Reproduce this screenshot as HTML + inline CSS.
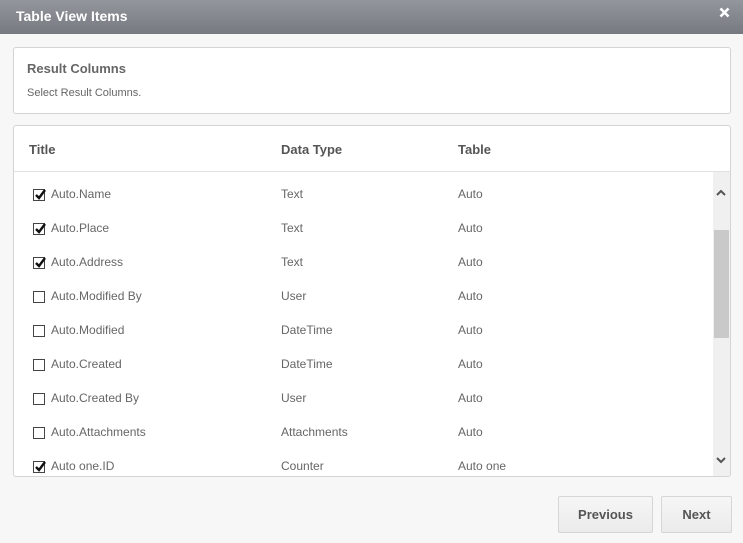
<!DOCTYPE html><html><head><style>
body{margin:0;width:743px;height:543px;background:#f7f7f7;font-family:"Liberation Sans",sans-serif;position:relative;overflow:hidden}
.hdr{position:absolute;left:0;top:0;width:743px;height:34px;background:linear-gradient(#93969d,#76797f);color:#fff;font-weight:bold;font-size:14px}
.ttl{position:absolute;left:16px;top:8px}
.x{position:absolute;left:719px;top:7px}
.p{position:absolute;background:#fff;border:1px solid #d4d4d4;border-radius:3px;box-sizing:border-box}
.t{position:absolute;font-size:12px;color:#666;white-space:nowrap}
.h{position:absolute;font-size:13px;font-weight:bold;color:#555}
.cb{position:absolute;left:33px;width:12px;height:12px;border:1px solid #444;background:#fff;box-sizing:border-box}
.btn{position:absolute;top:496px;height:37px;border:1px solid #d6d6d6;border-radius:2px;background:linear-gradient(#f6f6f6,#ebebeb);box-sizing:border-box;font-size:13px;font-weight:bold;color:#555;text-align:center;line-height:35px}
</style></head><body>
<div class="hdr"><span class="ttl">Table View Items</span><svg class="x" width="11" height="11"><path d="M1.5 1.5L9.5 9.5M9.5 1.5L1.5 9.5" stroke="#fff" stroke-width="2.6"/></svg></div>
<div class="p" style="left:13px;top:47px;width:718px;height:67px"></div>
<div class="h" style="left:27px;top:61px;color:#666">Result Columns</div>
<div class="t" style="left:27px;top:87px;font-size:11px">Select Result Columns.</div>
<div class="p" style="left:13px;top:125px;width:718px;height:352px;overflow:hidden">
<div style="position:absolute;left:0;top:45px;width:716px;border-top:1px solid #e2e2e2"></div>
<div style="position:absolute;left:699px;top:46px;width:17px;height:305px;background:#f0f0f0"></div>
<div style="position:absolute;left:700px;top:104px;width:15px;height:108px;background:#c9c9c9"></div>
<svg style="position:absolute;left:701px;top:63px" width="12" height="8"><path d="M2 6L6 2L10 6" stroke="#555" stroke-width="2" fill="none"/></svg>
<svg style="position:absolute;left:701px;top:330px" width="12" height="8"><path d="M2 2L6 6L10 2" stroke="#555" stroke-width="2" fill="none"/></svg>
</div>
<div class="h" style="left:29px;top:142px">Title</div>
<div class="h" style="left:281px;top:142px">Data Type</div>
<div class="h" style="left:458px;top:142px">Table</div>
<div id="rows"></div>
<div class="btn" style="left:558px;width:95px">Previous</div>
<div class="btn" style="left:661px;width:71px">Next</div>
<script>
var r=[["Auto.Name","Text","Auto",1],["Auto.Place","Text","Auto",1],["Auto.Address","Text","Auto",1],["Auto.Modified By","User","Auto",0],["Auto.Modified","DateTime","Auto",0],["Auto.Created","DateTime","Auto",0],["Auto.Created By","User","Auto",0],["Auto.Attachments","Attachments","Auto",0],["Auto one.ID","Counter","Auto one",1]];
var h="";r.forEach(function(a,i){var y=187+i*34;
h+='<div class="cb" style="top:'+(y+2)+'px">'+(a[3]?'<svg width="12" height="12" style="position:absolute;left:0px;top:-2px"><path d="M2 7L5 10L11 2" stroke="#111" stroke-width="2.4" fill="none"/></svg>':'')+'</div>';
h+='<div class="t" style="left:51px;top:'+y+'px">'+a[0]+'</div><div class="t" style="left:281px;top:'+y+'px">'+a[1]+'</div><div class="t" style="left:458px;top:'+y+'px">'+a[2]+'</div>';});
document.getElementById("rows").innerHTML=h;
</script>
</body></html>
